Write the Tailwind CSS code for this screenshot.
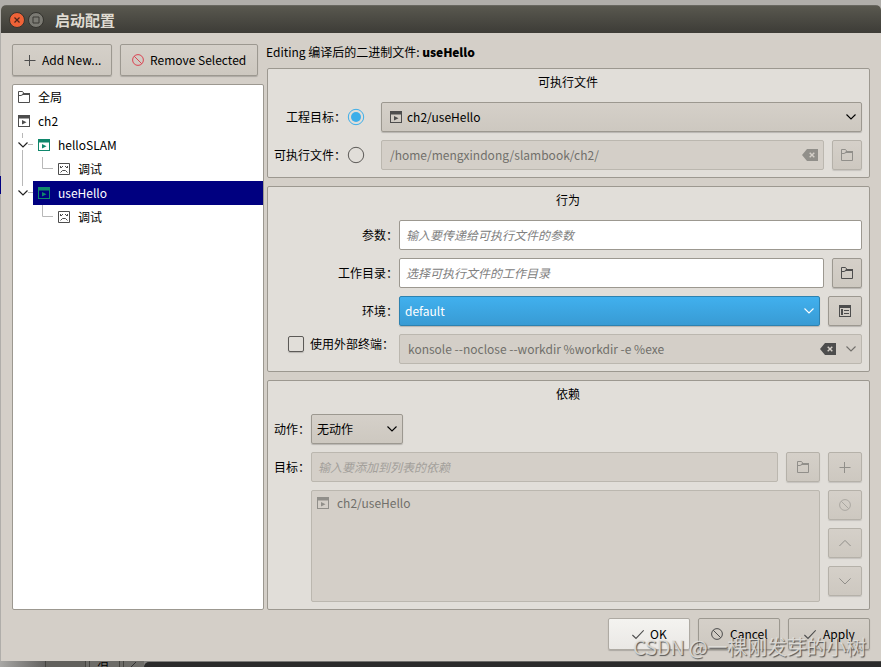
<!DOCTYPE html>
<html lang="zh-CN">
<head>
    <meta charset="UTF-8">
    <meta name="viewport" content="width=device-width, initial-scale=1.0">
    <title>启动配置</title>
    <script src="https://cdn.jsdelivr.net/npm/@tailwindcss/browser@4"></script>
</head>

<body class="w-[881px] h-[667px] overflow-hidden relative bg-[#b0aeaa] text-black text-[12px] leading-4 font-['Noto_Sans_CJK_SC',sans-serif]">
    <!-- 图标 -->
    <svg class="hidden">
        <symbol id="folder" viewBox="0 0 12 12">
            <path d="M.5 11.5V.5H4.5L6 2.5H11.5V11.5ZM.5 4.5H3L5 3.5H11.5" fill="none" stroke="currentColor"/>
            <path d="M5 2H12V4H4Z" fill="currentColor"/>
        </symbol>
        <symbol id="run" viewBox="0 0 12 12">
            <path d="M0 0H12V12H0ZM1 3.5V11H11V3.5Z" fill="currentColor" fill-rule="evenodd"/>
            <path d="M4 5V9.5L8.5 7.3Z" fill="currentColor"/>
        </symbol>
        <symbol id="debug" viewBox="0 0 12 12">
            <path d="M.5 .5H11.5V11.5H.5Z M2.5 9.5L4.5 7.5H7.5L9.5 9.5" fill="none" stroke="currentColor"/>
            <path d="M2 3H3V4H4V5H2ZM4 3H5V4H4ZM7 3H8V4H7ZM8 4H10V5H8ZM9 3H10V4H9Z" fill="currentColor"/>
        </symbol>
        <symbol id="plus" viewBox="0 0 12 12">
            <path d="M.5 6.5H11.5M5.5 1V12" fill="none" stroke="currentColor"/>
        </symbol>
        <symbol id="ban" viewBox="0 0 12 12">
            <circle cx="6" cy="6" r="5.4" fill="none" stroke="currentColor"/>
            <path d="M2.2 2.2L9.8 9.8" stroke="currentColor"/>
        </symbol>
        <symbol id="check" viewBox="0 0 12 12">
            <path d="M.4 7L4 10.4L11.7 2.3" fill="none" stroke="currentColor" stroke-width="1.1"/>
        </symbol>
        <symbol id="down" viewBox="0 0 12 12">
            <path d="M1.5 3.5L6 8L10.5 3.5" fill="none" stroke="currentColor" stroke-width="1.1"/>
        </symbol>
        <symbol id="big-down" viewBox="0 0 12 12">
            <path d="M.4 3.4L6 9L11.6 3.4" fill="none" stroke="currentColor"/>
        </symbol>
        <symbol id="big-up" viewBox="0 0 12 12">
            <path d="M.4 9L6 3.4L11.6 9" fill="none" stroke="currentColor"/>
        </symbol>
        <symbol id="clear" viewBox="0 0 16 12">
            <path d="M0 6L5 0H16V12H5ZM7.2 4.2L9 6L7.2 7.8L8.2 8.8L10 7L11.8 8.8L12.8 7.8L11 6L12.8 4.2L11.8 3.2L10 5L8.2 3.2Z" fill="currentColor" fill-rule="evenodd"/>
        </symbol>
        <symbol id="detail" viewBox="0 0 12 12">
            <path d="M0 0H12V12H0ZM1 3V11H11V3Z" fill="currentColor" fill-rule="evenodd"/>
            <path d="M2 4H4V10H2ZM5 5H10V6H5ZM5 8H10V9H5Z" fill="currentColor"/>
        </symbol>
    </svg>

    <!-- 窗口后面的内容 -->
    <div class="absolute inset-x-0 bottom-0 h-[6px] flex bg-linear-to-r from-[#8d8c89] to-[#4f4e4c]">
        <div class="w-[45px] bg-linear-to-r from-[#a9a8a5] to-[#636260]"></div>
        <div class="w-[41px] border-x border-[#454440] bg-[#62615d]"></div>
        <div class="w-[4px] border-r border-[#454440] bg-[#6d6c68]"></div>
        <div class="w-[30px] border-r border-[#454440] bg-[#6d6c68] overflow-hidden relative"><span class="absolute left-[7px] -top-[8px]">治</span></div>
        <div class="w-[4px] border-r border-[#454440] bg-[#6d6c68]"></div>
        <div class="w-[20px] bg-[#6d6c68]"><svg class="w-[6px] h-[6px] ml-[7px]" viewBox="0 0 6 6"><path d="M0 6L5 1" stroke="#333"/></svg></div>
        <div class="flex-1 mt-px rounded-tl-[5px] bg-[#2b2b2b]"></div>
    </div>
    <div class="absolute left-0 top-[176px] w-px h-[18px] bg-[#000080]"></div>

    <div class="absolute left-px top-[5px] w-[880px] h-[656px] flex flex-col rounded-t-[5px] overflow-hidden bg-[#d4cfc8]">
        <!-- 标题栏 -->
        <div class="h-[28px] shrink-0 flex items-center pl-2 bg-linear-to-b from-[#59584f] to-[#3d3c37] border-t border-[#686760]">
            <svg class="w-[36px] h-[18px]" viewBox="0 0 36 18">
                <circle cx="8" cy="9" r="7.5" fill="#ee6237" stroke="#34332e"/>
                <path d="M5.5 6.5L10.5 11.5M10.5 6.5L5.5 11.5" stroke="#4d251a" stroke-width="1.2"/>
                <circle cx="27" cy="9" r="7.5" fill="#7b7a73" stroke="#34332e"/>
                <path d="M24 6H30V12H24Z" fill="none" stroke="#3a3934"/>
            </svg>
            <h1 class="ml-[10px] text-[15px] leading-5 font-bold text-[#dfdbd2]">启动配置</h1>
        </div>

        <div class="flex pl-[11px] pt-[11px] gap-[3px]">
            <!-- 左侧：目标列表 -->
            <div class="w-[252px] shrink-0">
                <div class="flex gap-2 h-[32px]">
                    <button class="w-[100px] flex items-center pl-[11px] rounded-[2px] border border-[#9c9890] bg-linear-to-b from-[#d5d0c9] to-[#cdc8c0] shadow-[0_1px_1px_#00000030]">
                        <svg class="size-3 text-[#4d4d4d]"><use href="#plus"/></svg><span class="ml-[6px]">Add New...</span>
                    </button>
                    <button class="w-[138px] flex items-center pl-[11px] rounded-[2px] border border-[#9c9890] bg-linear-to-b from-[#d5d0c9] to-[#cdc8c0] shadow-[0_1px_1px_#00000030]">
                        <svg class="size-3 text-[#da4453]"><use href="#ban"/></svg><span class="ml-[6px] whitespace-nowrap">Remove Selected</span>
                    </button>
                </div>

                <div class="mt-2 h-[526px] rounded-[2px] border border-[#9c9890] bg-white text-[#4d4d4d]">
                    <div class="h-6 flex items-center pl-[5px]"><svg class="size-3"><use href="#folder"/></svg><span class="ml-2 text-black">全局</span></div>
                    <div class="h-6 flex items-center pl-[5px]"><svg class="size-3"><use href="#run"/></svg><span class="ml-2 text-black">ch2</span></div>
                    <div class="h-6 flex items-center">
                        <svg class="w-[20px] h-6" viewBox="0 0 20 24"><path d="M9.5 0V5M9.5 17V24M15 11.5H20" stroke="#b8b8b8"/><path d="M5.5 9.5L10 14L14.5 9.5" fill="none" stroke="#222" stroke-width="1.2"/></svg>
                        <svg class="size-3 ml-[5px] text-[#10876c]"><use href="#run"/></svg><span class="ml-2 text-black">helloSLAM</span>
                    </div>
                    <div class="h-6 flex items-center">
                        <svg class="w-[40px] h-6" viewBox="0 0 40 24"><path d="M9.5 0V24M29.5 0V11.5H40" fill="none" stroke="#b8b8b8"/></svg>
                        <svg class="size-3 ml-[5px]"><use href="#debug"/></svg><span class="ml-2 text-black">调试</span>
                    </div>
                    <div class="h-6 flex items-center">
                        <svg class="w-[20px] h-6" viewBox="0 0 20 24"><path d="M9.5 0V5M15 11.5H20" stroke="#b8b8b8"/><path d="M5.5 9.5L10 14L14.5 9.5" fill="none" stroke="#222" stroke-width="1.2"/></svg>
                        <div class="flex-1 h-6 flex items-center pl-[5px] bg-[#000080]"><svg class="size-3 text-[#10876c]"><use href="#run"/></svg><span class="ml-2 text-white">useHello</span></div>
                    </div>
                    <div class="h-6 flex items-center">
                        <svg class="w-[40px] h-6" viewBox="0 0 40 24"><path d="M29.5 0V11.5H40" fill="none" stroke="#b8b8b8"/></svg>
                        <svg class="size-3 ml-[5px]"><use href="#debug"/></svg><span class="ml-2 text-black">调试</span>
                    </div>
                </div>
            </div>

            <!-- 右侧：编辑区 -->
            <div class="w-[603px]">
                <div class="h-[24px] -ml-px whitespace-nowrap">Editing 编译后的二进制文件: <b class="font-black tracking-[-0.1px]">useHello</b></div>

                <!-- 可执行文件 -->
                <section class="h-[110px] rounded-[2px] border border-[#9c9890] bg-[#e1ded9] pl-[6px] pr-[7px]">
                    <h2 class="h-[33px] pt-[5px] text-center">可执行文件</h2>
                    <div class="h-[30px] flex items-center">
                        <span class="w-[72px] text-right whitespace-nowrap">工程目标：</span>
                        <svg class="size-[18px] ml-px" viewBox="0 0 18 18"><circle cx="9" cy="9" r="7.7" fill="none" stroke="#3daee9"/><circle cx="9" cy="9" r="5" fill="#3daee9"/></svg>
                        <div class="ml-[16px] flex-1 h-[30px] flex items-center pl-2 pr-[4px] rounded-[2px] border border-[#9c9890] bg-linear-to-b from-[#d5d0c9] to-[#cdc8c0] shadow-[0_1px_1px_#00000030]">
                            <svg class="size-3 text-[#4d4d4d]"><use href="#run"/></svg><span class="ml-[5px]">ch2/useHello</span>
                            <svg class="size-3 ml-auto"><use href="#down"/></svg>
                        </div>
                    </div>
                    <div class="mt-2 h-[30px] flex items-center">
                        <span class="w-[72px] text-right whitespace-nowrap">可执行文件：</span>
                        <svg class="size-[18px] ml-px" viewBox="0 0 18 18"><circle cx="9" cy="9" r="7.7" fill="none" stroke="#5c5a57"/></svg>
                        <div class="ml-[16px] flex-1 h-[30px] flex items-center pl-2 pr-[5px] rounded-[2px] border border-[#bbb7af] bg-[#d4cfc8] text-[#716f6b]">
                            <span>/home/mengxindong/slambook/ch2/</span>
                            <svg class="w-4 h-3 ml-auto text-[#918f8a]"><use href="#clear"/></svg>
                        </div>
                        <button class="ml-2 w-[30px] h-[30px] flex items-center justify-center rounded-[2px] border border-[#b5b1a9] bg-linear-to-b from-[#d5d0c9] to-[#cdc8c0] shadow-[0_1px_1px_#00000020] text-[#918f8a]"><svg class="size-3"><use href="#folder"/></svg></button>
                    </div>
                </section>

                <!-- 行为 -->
                <section class="mt-2 h-[186px] rounded-[2px] border border-[#9c9890] bg-[#e1ded9] pl-[6px] pr-[7px]">
                    <h2 class="h-[33px] pt-[5px] text-center">行为</h2>
                    <div class="h-[30px] flex items-center">
                        <span class="w-[125px] pr-px text-right">参数：</span>
                        <div class="flex-1 h-[30px] flex items-center pl-[6px] rounded-[2px] border border-[#9c9890] bg-white italic text-[#808080]">输入要传递给可执行文件的参数</div>
                    </div>
                    <div class="mt-2 h-[30px] flex items-center">
                        <span class="w-[125px] pr-px text-right">工作目录：</span>
                        <div class="flex-1 h-[30px] flex items-center pl-[6px] rounded-[2px] border border-[#9c9890] bg-white italic text-[#808080]">选择可执行文件的工作目录</div>
                        <button class="ml-2 w-[30px] h-[30px] flex items-center justify-center rounded-[2px] border border-[#9c9890] bg-linear-to-b from-[#d5d0c9] to-[#cdc8c0] shadow-[0_1px_1px_#00000030] text-[#4d4d4d]"><svg class="size-3"><use href="#folder"/></svg></button>
                    </div>
                    <div class="mt-2 h-[30px] flex items-center">
                        <span class="w-[125px] pr-px text-right">环境：</span>
                        <div class="flex-1 h-[30px] flex items-center pl-[5px] pr-[4px] rounded-[2px] border border-[#2d82b0] bg-linear-to-b from-[#41b0ee] to-[#389bd4] shadow-[0_1px_1px_#00000030] text-white">
                            <span>default</span>
                            <svg class="size-3 ml-auto"><use href="#down"/></svg>
                        </div>
                        <button class="ml-2 w-[34px] h-[30px] flex items-center justify-center rounded-[2px] border border-[#9c9890] bg-linear-to-b from-[#d5d0c9] to-[#cdc8c0] shadow-[0_1px_1px_#00000030] text-[#4d4d4d]"><svg class="size-3"><use href="#detail"/></svg></button>
                    </div>
                    <div class="mt-2 h-[30px] flex items-center">
                        <div class="w-[125px] flex items-center pl-[14px] pb-[10px] whitespace-nowrap">
                            <span class="size-4 shrink-0 rounded-[2px] border border-[#5c5a57] shadow-[0_1px_1px_#00000030]"></span>
                            <span class="ml-[6px]">使用外部终端：</span>
                        </div>
                        <div class="flex-1 h-[30px] flex items-center pl-2 pr-[4px] rounded-[2px] border border-[#bbb7af] bg-[#d4cfc8] text-[#716f6b]">
                            <span>konsole --noclose --workdir %workdir -e %exe</span>
                            <svg class="w-4 h-3 ml-auto text-[#4d4d4d]"><use href="#clear"/></svg>
                            <svg class="size-3 ml-[9px]"><use href="#down"/></svg>
                        </div>
                    </div>
                </section>

                <!-- 依赖 -->
                <section class="mt-2 h-[230px] rounded-[2px] border border-[#9c9890] bg-[#e1ded9] pl-[6px] pr-[7px]">
                    <h2 class="h-[33px] pt-[5px] text-center">依赖</h2>
                    <div class="h-[30px] flex items-center">
                        <span class="w-[37px]">动作：</span>
                        <div class="w-[92px] h-[30px] flex items-center pl-[5px] pr-[4px] rounded-[2px] border border-[#9c9890] bg-linear-to-b from-[#d5d0c9] to-[#cdc8c0] shadow-[0_1px_1px_#00000030]">
                            无动作<svg class="size-3 ml-auto"><use href="#down"/></svg>
                        </div>
                    </div>
                    <div class="mt-2 h-[30px] flex items-center">
                        <span class="w-[37px]">目标：</span>
                        <div class="flex-1 h-[30px] flex items-center pl-[6px] rounded-[2px] border border-[#bbb7af] bg-[#d4cfc8] italic text-[#a3a09b]">输入要添加到列表的依赖</div>
                        <button class="ml-2 w-[34px] h-[30px] flex items-center justify-center rounded-[2px] border border-[#b5b1a9] bg-linear-to-b from-[#d5d0c9] to-[#cdc8c0] shadow-[0_1px_1px_#00000020] text-[#918f8a]"><svg class="size-3"><use href="#folder"/></svg></button>
                        <button class="ml-2 w-[34px] h-[30px] flex items-center justify-center rounded-[2px] border border-[#b5b1a9] bg-linear-to-b from-[#d5d0c9] to-[#cdc8c0] shadow-[0_1px_1px_#00000020] text-[#918f8a]"><svg class="size-3"><use href="#plus"/></svg></button>
                    </div>
                    <div class="mt-2 pl-[37px] flex gap-2">
                        <div class="flex-1 h-[112px] flex items-start pl-[5px] pt-[6px] rounded-[2px] border border-[#bbb7af] bg-[#d4cfc8] text-[#716f6b]">
                            <svg class="size-3 text-[#918f8a]"><use href="#run"/></svg><span class="ml-2 -mt-[2px]">ch2/useHello</span>
                        </div>
                        <div class="w-[34px] flex flex-col gap-2 text-[#918f8a]">
                            <button class="h-[30px] flex items-center justify-center rounded-[2px] border border-[#b5b1a9] bg-linear-to-b from-[#d5d0c9] to-[#cdc8c0] shadow-[0_1px_1px_#00000020] text-[#aaa7a1]"><svg class="size-3"><use href="#ban"/></svg></button>
                            <button class="h-[30px] flex items-center justify-center rounded-[2px] border border-[#b5b1a9] bg-linear-to-b from-[#d5d0c9] to-[#cdc8c0] shadow-[0_1px_1px_#00000020]"><svg class="size-3"><use href="#big-up"/></svg></button>
                            <button class="h-[30px] flex items-center justify-center rounded-[2px] border border-[#b5b1a9] bg-linear-to-b from-[#d5d0c9] to-[#cdc8c0] shadow-[0_1px_1px_#00000020]"><svg class="size-3"><use href="#big-down"/></svg></button>
                        </div>
                    </div>
                </section>
            </div>
        </div>

        <!-- 底部按钮 -->
        <div class="mt-2 pr-[11px] flex justify-end gap-2">
            <button class="w-[82px] h-[32px] flex items-center pl-[23px] rounded-[2px] border border-[#aeaaa3] bg-linear-to-b from-[#f4f3f0] to-[#eae8e5] shadow-[0_1px_1px_#00000030]"><svg class="size-3 text-[#4d4d4d]"><use href="#check"/></svg><span class="ml-[6px]">OK</span></button>
            <button class="w-[82px] h-[32px] flex items-center pl-[12px] rounded-[2px] border border-[#9c9890] bg-linear-to-b from-[#d5d0c9] to-[#cdc8c0] shadow-[0_1px_1px_#00000030]"><svg class="size-3 text-[#4d4d4d]"><use href="#ban"/></svg><span class="ml-[7px]">Cancel</span></button>
            <button class="w-[82px] h-[32px] flex items-center pl-[15px] rounded-[2px] border border-[#9c9890] bg-linear-to-b from-[#d5d0c9] to-[#cdc8c0] shadow-[0_1px_1px_#00000030]"><svg class="size-3 text-[#4d4d4d]"><use href="#check"/></svg><span class="ml-[7px]">Apply</span></button>
        </div>
    </div>

    <!-- 水印 -->
    <div class="absolute left-[633px] top-[633px] text-[20px] leading-7 tracking-[-0.2px] whitespace-nowrap text-[#e4e2de]/85 [text-shadow:1px_1px_1px_#555]">CSDN @一棵刚发芽的小树</div>
</body>
</html>
